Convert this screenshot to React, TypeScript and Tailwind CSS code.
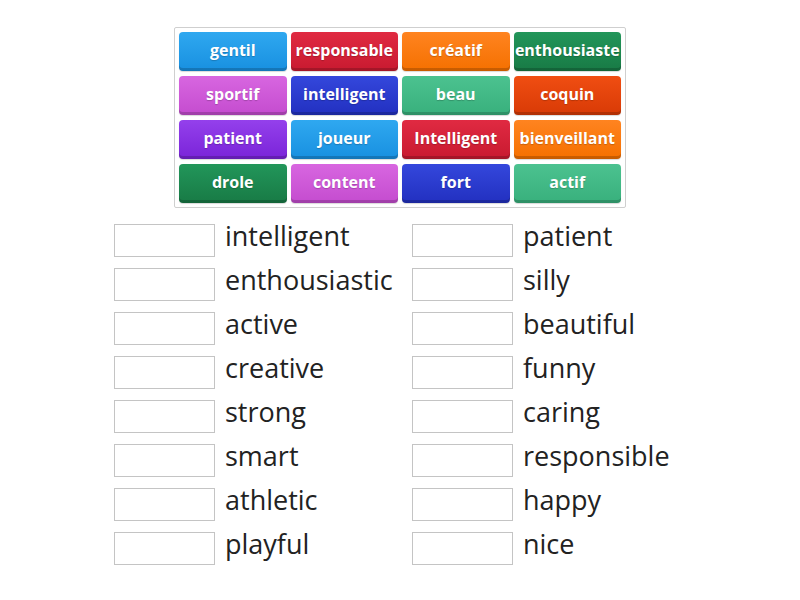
import React from "react";

const tiles: { t: string; c: string }[] = [
  { t: "gentil", c: "bg-[linear-gradient(#2fa8f0,#1890e0)]" },
  { t: "responsable", c: "bg-[linear-gradient(#e02a42,#c81a30)]" },
  { t: "créatif", c: "bg-[linear-gradient(#ff8420,#f57000)]" },
  { t: "enthousiaste", c: "bg-[linear-gradient(#22965a,#187a45)]" },
  { t: "sportif", c: "bg-[linear-gradient(#d866e0,#c44ccf)]" },
  { t: "intelligent", c: "bg-[linear-gradient(#3447dc,#2230c0)]" },
  { t: "beau", c: "bg-[linear-gradient(#4cc290,#38b07c)]" },
  { t: "coquin", c: "bg-[linear-gradient(#f04e12,#d83a06)]" },
  { t: "patient", c: "bg-[linear-gradient(#9440ec,#7a24d8)]" },
  { t: "joueur", c: "bg-[linear-gradient(#2fa8f0,#1890e0)]" },
  { t: "Intelligent", c: "bg-[linear-gradient(#e02a42,#c81a30)]" },
  { t: "bienveillant", c: "bg-[linear-gradient(#ff8420,#f57000)]" },
  { t: "drole", c: "bg-[linear-gradient(#22965a,#187a45)]" },
  { t: "content", c: "bg-[linear-gradient(#d866e0,#c44ccf)]" },
  { t: "fort", c: "bg-[linear-gradient(#3447dc,#2230c0)]" },
  { t: "actif", c: "bg-[linear-gradient(#4cc290,#38b07c)]" },
];

const left = ["intelligent", "enthousiastic", "active", "creative", "strong", "smart", "athletic", "playful"];
const right = ["patient", "silly", "beautiful", "funny", "caring", "responsible", "happy", "nice"];

function Row({ w }: { w: string }) {
  return (
    <div className="flex items-center h-[33px]">
      <div className="w-[101px] h-[33px] border border-[#c4c4c4] bg-white shrink-0" />
      <span className="ml-[10px] text-[27px] leading-none text-[#222] -mt-[10px] whitespace-nowrap">{w}</span>
    </div>
  );
}

export default function App() {
  return (
    <div className="w-[800px] h-[600px] bg-white pt-[27px]" style={{ fontFamily: '"Open Sans", sans-serif' }}>
      <div className="mx-auto w-[452px] h-[181px] border border-[#cfcfcf] rounded-[2px] p-[4px] grid grid-cols-4 gap-x-[4px] gap-y-[5px]">
        {tiles.map((x, i) => (
          <div
            key={i}
            className={`${x.c} h-[39px] rounded-[4px] flex items-center justify-center text-white font-bold text-[16px] pb-[3px] shadow-[inset_0_-3px_0_rgba(0,0,0,0.18),0_1px_1px_rgba(0,0,0,0.15)] [text-shadow:0_1px_1px_rgba(0,0,0,0.2)] whitespace-nowrap overflow-hidden`}
          >
            {x.t}
          </div>
        ))}
      </div>
      <div className="ml-[114px] mt-[16px] grid grid-cols-[298px_298px]">
        <div className="flex flex-col gap-[11px]">
          {left.map((w) => (
            <Row key={w} w={w} />
          ))}
        </div>
        <div className="flex flex-col gap-[11px]">
          {right.map((w) => (
            <Row key={w} w={w} />
          ))}
        </div>
      </div>
    </div>
  );
}
